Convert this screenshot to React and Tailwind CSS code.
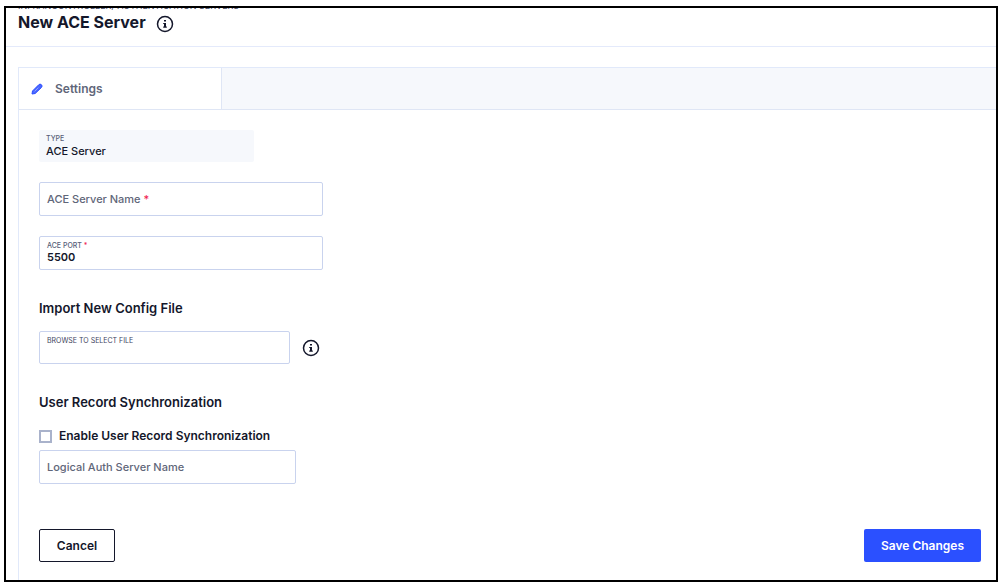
import React from "react";

const InfoIcon = () => (
  <svg viewBox="0 0 18 18" className="size-[18px]" fill="none" aria-hidden="true">
    <circle cx="9" cy="9" r="7.5" stroke="currentColor" strokeWidth="1.5" />
    <path d="M8 5h2v1.6H8z" fill="currentColor" />
    <path d="M7.2 8h2.8v3.6h.8v1.2H7.2v-1.2H8V9h-.8z" fill="currentColor" />
  </svg>
);

const PencilIcon = () => (
  <svg viewBox="0 0 12 12" className="size-3" aria-hidden="true">
    <path
      d="M1 11l.5-3 6.2-6.2a1.9 1.9 0 0 1 2.8 2.6L4.2 10.5z"
      fill="#4a67ff"
      stroke="#2b4dff"
      strokeLinejoin="round"
    />
    <path d="M3.6 8.4l3.8-3.8" stroke="#8fa3ff" strokeWidth="1" />
  </svg>
);

const SectionTitle = ({ children }) => (
  <h2 className="text-[13px] leading-5 font-semibold">{children}</h2>
);

const Required = () => <span className="text-[#f0244f]">*</span>;

const App = () => {
  return (
    <div className="h-screen bg-white pt-1.5 pr-1 pb-px pl-1 font-['Inter','Liberation_Sans',sans-serif] text-[#14172b]">
      <div className="flex h-full flex-col overflow-hidden border-2 border-black">
        {/* Page header */}
        <header className="border-b border-[#e4eafb] pb-[13px] pl-3">
          <nav aria-label="Breadcrumb" className="-mt-2 text-[9px] leading-3 text-[#3d4460]">
            <a href="#controller">INFRANCONTROLLER</a>/ <a href="#servers">AUTHENTICATION SERVERS</a>
          </nav>
          <div className="flex items-start gap-2.5">
            <h1 className="text-base leading-5 font-bold">New ACE Server</h1>
            <button type="button" aria-label="About ACE servers" className="mt-[3px]">
              <InfoIcon />
            </button>
          </div>
        </header>

        <main className="mt-5 ml-3 flex grow flex-col border-t border-l border-[#e1e9fa]">
          {/* Tabs */}
          <div role="tablist" className="flex border-b border-[#dfe6f5] bg-[#f6f8fc]">
            <button
              type="button"
              role="tab"
              aria-selected="true"
              className="flex h-[41px] w-[203px] items-center gap-3 border-r border-[#dfe6f5] bg-white px-3 text-xs font-semibold text-[#5f6679]"
            >
              <PencilIcon />
              Settings
            </button>
          </div>

          <form id="ace-server" className="flex flex-col items-start px-5 pt-5">
            <div className="flex h-8 w-[215px] flex-col rounded-xs bg-[#f6f8fc] px-[7px] pt-1">
              <span className="text-[7px] leading-[10px] font-medium text-[#565e78]">TYPE</span>
              <span className="text-[11px] leading-[14px] font-medium">ACE Server</span>
            </div>

            <label className="relative mt-5 block h-[34px] w-[284px]">
              <input
                type="text"
                required
                placeholder=" "
                className="peer size-full rounded-xs border border-[#c9d3ee] px-[7px] text-[11px] font-medium shadow-none outline-none focus:border-[#2b50ff]"
              />
              <span className="pointer-events-none absolute inset-y-0 left-2 hidden items-center gap-[3px] text-[11px] font-medium text-[#5f6679] peer-placeholder-shown:flex">
                ACE Server Name <Required />
              </span>
            </label>

            <label className="mt-5 flex h-[34px] w-[284px] flex-col rounded-xs border border-[#c9d3ee] px-[7px] pt-1 focus-within:border-[#2b50ff]">
              <span className="text-[7px] leading-[10px] font-medium text-[#565e78]">
                ACE PORT <Required />
              </span>
              <input
                type="text"
                defaultValue="5500"
                className="h-3 w-full text-[11px] leading-3 font-semibold outline-none"
              />
            </label>

            <div className="mt-7">
              <SectionTitle>Import New Config File</SectionTitle>
            </div>
            <div className="mt-[13px] flex items-center gap-3">
              <label className="block h-[33px] w-[251px] rounded-xs border border-[#c9d3ee] px-[7px] pt-1">
                <span className="block text-[7px] leading-[10px] text-[#3d4460]">BROWSE TO SELECT FILE</span>
                <input type="file" className="sr-only" />
              </label>
              <button type="button" aria-label="About the config file">
                <InfoIcon />
              </button>
            </div>

            <div className="mt-7">
              <SectionTitle>User Record Synchronization</SectionTitle>
            </div>
            <label className="mt-3.5 flex h-5 items-center gap-[7px] text-xs font-semibold">
              <input
                type="checkbox"
                className="size-[13px] appearance-none border-2 border-[#a9b2cb] checked:bg-[#2b50ff]"
              />
              Enable User Record Synchronization
            </label>
            <input
              type="text"
              aria-label="Logical Auth Server Name"
              placeholder="Logical Auth Server Name"
              className="mt-1 h-[34px] w-[257px] rounded-xs border border-[#c9d3ee] px-[7px] text-[11px] font-medium outline-none placeholder:text-[#5f6679]"
            />
          </form>

          {/* Actions */}
          <footer className="mt-auto flex justify-between pr-[15px] pb-[18px] pl-5">
            <button
              type="button"
              className="h-[33px] w-[76px] rounded-xs border border-[#14172b] text-xs font-semibold"
            >
              Cancel
            </button>
            <button
              type="submit"
              form="ace-server"
              className="h-[33px] w-[117px] rounded-xs bg-[#2b50ff] text-xs font-semibold text-white"
            >
              Save Changes
            </button>
          </footer>
        </main>
      </div>
    </div>
  );
};

export default App;
